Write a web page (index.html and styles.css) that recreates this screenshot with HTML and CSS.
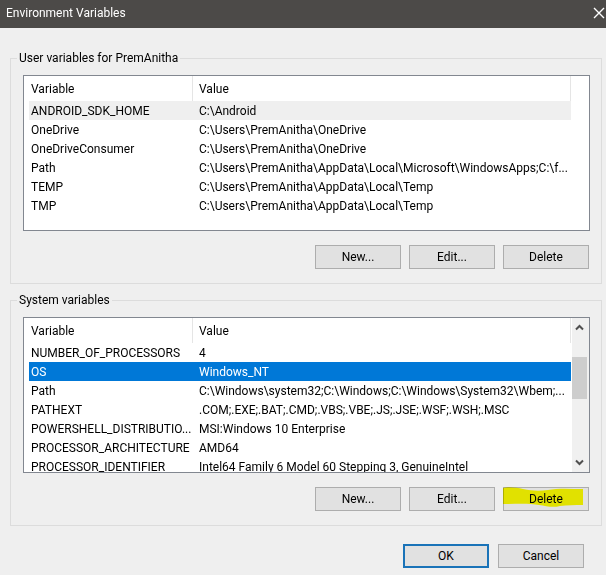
FILE: index.html
```html
<!DOCTYPE html>
<html lang="en">
<head>
    <meta charset="UTF-8">
    <title>Environment Variables</title>
    <link rel="stylesheet" href="styles.css">
</head>
<body>

<header class="title-bar">
    <h1>Environment Variables</h1>
    <button type="button" class="close-btn" aria-label="Close">
        <svg width="12" height="12" viewBox="0 0 12 12"><path d="M1 1L11 11M11 1L1 11" stroke="#fff" stroke-width="1.4"/></svg>
    </button>
</header>

<main class="dialog">
    <fieldset class="group">
        <legend>User variables for PremAnitha</legend>
        <div class="list">
            <div class="list-view">
                <table>
                    <thead>
                        <tr><th class="name">Variable</th><th>Value</th></tr>
                    </thead>
                    <tbody>
                        <tr class="inactive"><td>ANDROID_SDK_HOME</td><td>C:\Android</td></tr>
                        <tr><td>OneDrive</td><td>C:\Users\PremAnitha\OneDrive</td></tr>
                        <tr><td>OneDriveConsumer</td><td>C:\Users\PremAnitha\OneDrive</td></tr>
                        <tr><td>Path</td><td>C:\Users\PremAnitha\AppData\Local\Microsoft\WindowsApps;C:\f...</td></tr>
                        <tr><td>TEMP</td><td>C:\Users\PremAnitha\AppData\Local\Temp</td></tr>
                        <tr><td>TMP</td><td>C:\Users\PremAnitha\AppData\Local\Temp</td></tr>
                    </tbody>
                </table>
            </div>
        </div>
        <div class="actions">
            <button type="button" class="btn">New...</button>
            <button type="button" class="btn">Edit...</button>
            <button type="button" class="btn">Delete</button>
        </div>
    </fieldset>

    <fieldset class="group">
        <legend>System variables</legend>
        <div class="list">
            <div class="list-view">
                <table>
                    <thead>
                        <tr><th class="name">Variable</th><th>Value</th></tr>
                    </thead>
                    <tbody>
                        <tr><td>NUMBER_OF_PROCESSORS</td><td>4</td></tr>
                        <tr class="selected"><td>OS</td><td>Windows_NT</td></tr>
                        <tr><td>Path</td><td>C:\Windows\system32;C:\Windows;C:\Windows\System32\Wbem;...</td></tr>
                        <tr><td>PATHEXT</td><td>.COM;.EXE;.BAT;.CMD;.VBS;.VBE;.JS;.JSE;.WSF;.WSH;.MSC</td></tr>
                        <tr><td>POWERSHELL_DISTRIBUTIO...</td><td>MSI:Windows 10 Enterprise</td></tr>
                        <tr><td>PROCESSOR_ARCHITECTURE</td><td>AMD64</td></tr>
                        <tr><td>PROCESSOR_IDENTIFIER</td><td>Intel64 Family 6 Model 60 Stepping 3, GenuineIntel</td></tr>
                    </tbody>
                </table>
            </div>
            <div class="scrollbar">
                <button type="button" class="scroll-btn" aria-label="Scroll up">
                    <svg width="9" height="7" viewBox="0 0 9 7"><path d="M1 5.5L4.5 2L8 5.5" fill="none" stroke="#505050" stroke-width="2"/></svg>
                </button>
                <div class="track"><div class="thumb"></div></div>
                <button type="button" class="scroll-btn" aria-label="Scroll down">
                    <svg width="9" height="7" viewBox="0 0 9 7"><path d="M1 1.5L4.5 5L8 1.5" fill="none" stroke="#505050" stroke-width="2"/></svg>
                </button>
            </div>
        </div>
        <div class="actions">
            <button type="button" class="btn">New...</button>
            <button type="button" class="btn">Edit...</button>
            <button type="button" class="btn">Delete
                <svg class="marker" width="82" height="22" viewBox="0 0 82 22"><path d="M1 1C6 -0.5 15 0.5 21 2C30 4 38 4 46 3C56 1 69 2 81 2V18C73 18 65 18 58 19C51 21 44 19 37 18C27 16 14 17 1 17Z" fill="#ff0"/></svg>
            </button>
        </div>
    </fieldset>

    <div class="footer">
        <button type="submit" class="btn default">OK</button>
        <button type="button" class="btn">Cancel</button>
    </div>
</main>

</body>
</html>
```
FILE: styles.css
```css
* {
    box-sizing: border-box;
}

body {
    margin: 0;
    background-color: #efefef;
    color: #000;
    font-family: Roboto, "Noto Sans", sans-serif;
    font-size: 12px;
    line-height: 16px;
}

.title-bar {
    display: flex;
    align-items: center;
    justify-content: space-between;
    height: 28px;
    padding: 0 1px 2px 6px;
    background-color: #4c4a48;
    color: #fff;
}

.title-bar h1 {
    margin: 0;
    font-size: 12px;
    font-weight: normal;
}

.close-btn {
    display: flex;
    padding: 0;
    border: none;
    background: transparent;
}

.dialog {
    padding: 22px 4px 7px 10px;
}

.group {
    min-width: 0;
    margin: 0 0 8px;
    padding: 9px 11px 14px 12px;
    border: 1px solid #dcdcdc;
}

legend {
    margin-left: -6px;
    padding: 0 2px;
}

.list {
    display: flex;
    height: 156px;
    border: 1px solid #828790;
    background-color: #fff;
    overflow: hidden;
}

.list-view {
    flex: 1;
    min-width: 0;
    margin: 0 18px 0 5px;
    overflow: hidden;
}

.list-view:not(:last-child) {
    margin-right: 1px;
}

table {
    width: 100%;
    border-collapse: separate;
    border-spacing: 0;
    table-layout: fixed;
}

th,
td {
    padding: 2px 0 0 6px;
    height: 19px;
    line-height: 17px;
    text-align: left;
    font-weight: normal;
    white-space: nowrap;
}

th {
    height: 25px;
    line-height: 23px;
    border-right: 1px solid #e5e5e5;
}

th:first-child,
td:first-child {
    padding-left: 2px;
}

.name {
    width: 164px;
}

.inactive {
    background-color: #efefef;
}

.selected {
    background-color: #0078d7;
    color: #fff;
}

.scrollbar {
    display: flex;
    flex-direction: column;
    width: 17px;
    padding-right: 2px;
    background-color: #f0f0f0;
}

.scroll-btn {
    display: flex;
    align-items: center;
    justify-content: center;
    height: 19px;
    padding: 0;
    border: none;
    background: transparent;
}

.track {
    flex: 1;
    padding-top: 20px;
}

.thumb {
    height: 42px;
    background-color: #cdcdcd;
}

.actions,
.footer {
    display: flex;
    justify-content: flex-end;
    gap: 9px;
}

.actions {
    gap: 8px;
    margin-top: 14px;
    padding-right: 1px;
}

.footer {
    margin-top: 18px;
    padding-right: 18px;
}

.btn {
    position: relative;
    width: 86px;
    height: 24px;
    padding: 0;
    border: 1px solid #adadad;
    background-color: #e1e1e1;
    color: #000;
    font: inherit;
}

.btn.default {
    border: 2px solid #1a73b8;
}

/* highlighter stroke over the button */
.marker {
    position: absolute;
    top: -1px;
    left: -2px;
    mix-blend-mode: multiply;
}
```
